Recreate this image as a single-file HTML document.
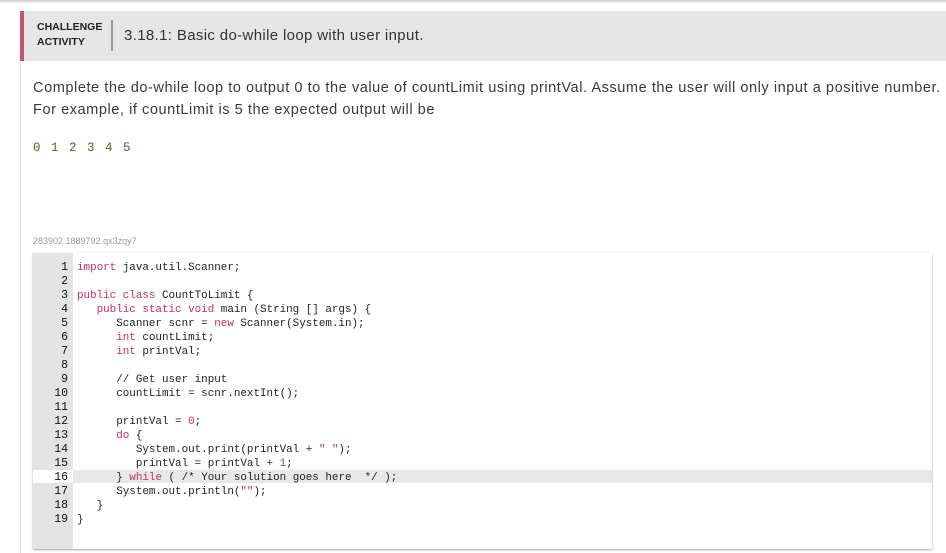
<!DOCTYPE html>
<html><head><meta charset="utf-8"><style>
body{margin:0;width:946px;height:553px;background:#fff;position:relative;overflow:hidden;font-family:"Liberation Sans",sans-serif;}
.topbar{position:absolute;left:0;top:0;width:946px;height:3px;background:linear-gradient(#cfcfcf,#f4f4f4);}
.hdr{position:absolute;left:20px;top:11px;width:926px;height:50px;background:#e6e6e6;border-left:4px solid #c0566e;box-sizing:border-box;}
.ca{position:absolute;left:13px;top:9px;font-size:10.5px;font-weight:bold;line-height:15px;color:#222;}
.div{position:absolute;left:87px;top:9px;width:2px;height:31px;background:#999;}
.ttl{position:absolute;left:100px;top:16px;font-size:15px;color:#333;letter-spacing:0.35px;}
.leftline{position:absolute;left:20px;top:61px;width:1px;height:492px;background:#e3e3e3;}
.p{position:absolute;left:33px;font-size:14.6px;color:#3a3a3a;white-space:nowrap;letter-spacing:0.53px;}
.out{position:absolute;left:33px;top:141px;font-family:"Liberation Mono",monospace;font-size:12.5px;color:#6b5a2a;letter-spacing:1.5px;}
.id{position:absolute;left:33px;top:236px;font-size:9px;color:#9a9a9a;}
.ed{position:absolute;left:33px;top:253px;width:899px;height:296px;background:#fff;box-shadow:0 1px 2px rgba(0,0,0,.35);}
.gut{position:absolute;left:0;top:0;width:40px;height:296px;background:#e4e4e4;}
.hl{position:absolute;left:0;top:217px;width:899px;height:13px;background:#e8e8e8;}
.hlg{position:absolute;left:0;top:217px;width:40px;height:13px;background:#fff;}
pre{position:absolute;margin:0;top:8px;font-family:"Liberation Mono",monospace;font-size:10.9px;line-height:14px;color:#222;}
.ln{left:0;width:35px;text-align:right;font-size:11.5px;color:#111;}
.code{left:44px;}
.k{color:#c0306a}.n{color:#c0306a}.s{color:#b03060}.c{color:#333}
</style></head><body>
<div class="topbar"></div>
<div class="hdr"><div class="ca">CHALLENGE<br>ACTIVITY</div><div class="div"></div><div class="ttl">3.18.1: Basic do-while loop with user input.</div></div>
<div class="leftline"></div>
<div class="p" style="top:80px">Complete the do-while loop to output 0 to the value of countLimit using printVal. Assume the user will only input a positive number.</div>
<div class="p" style="top:102px">For example, if countLimit is 5 the expected output will be</div>
<div class="out">0 1 2 3 4 5</div>
<div class="id">283902.1889792.qx3zqy7</div>
<div class="ed"><div class="gut"></div><div class="hl"></div><div class="hlg"></div>
<pre class="ln">1
2
3
4
5
6
7
8
9
10
11
12
13
14
15
16
17
18
19</pre>
<pre class="code"><span class="k">import</span> java.util.Scanner;

<span class="k">public class</span> CountToLimit {
   <span class="k">public static void</span> main (String [] args) {
      Scanner scnr = <span class="k">new</span> Scanner(System.in);
      <span class="k">int</span> countLimit;
      <span class="k">int</span> printVal;

      // Get user input
      countLimit = scnr.nextInt();

      printVal = <span class="n">0</span>;
      <span class="k">do</span> {
         System.out.print(printVal + <span class="s">" "</span>);
         printVal = printVal + <span class="n">1</span>;
      } <span class="k">while</span> ( /* Your solution goes here  */ );
      System.out.println(<span class="s">""</span>);
   }
}</pre>
</div>
</body></html>
